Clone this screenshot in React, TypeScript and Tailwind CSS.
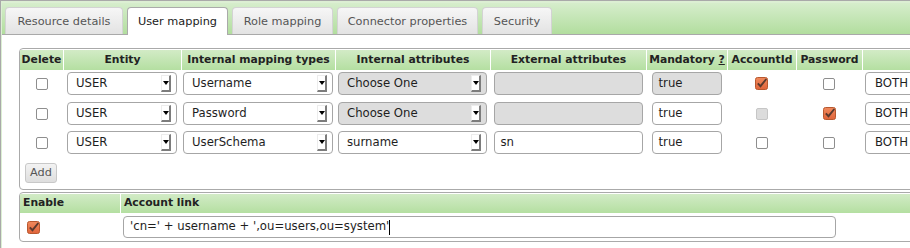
import React from "react";

function Box({ checked, disabled }: { checked?: boolean; disabled?: boolean }) {
  if (checked) {
    return (
      <svg width="13" height="13" viewBox="0 0 13 13" className="block">
        <defs>
          <linearGradient id="cbg" x1="0" y1="0" x2="0" y2="1">
            <stop offset="0" stopColor="#f08a5d" />
            <stop offset="1" stopColor="#e0643a" />
          </linearGradient>
        </defs>
        <rect x="0.5" y="0.5" width="12" height="12" rx="2" fill="url(#cbg)" stroke="#b8582f" />
        <path d="M2.8 6.3 L5.5 9.2 L11.3 2" fill="none" stroke="#5a3a2e" strokeWidth="1.9" />
      </svg>
    );
  }
  return (
    <div
      className={
        disabled
          ? "w-[12px] h-[12px] rounded-[2px] border border-[#c6c6c6] bg-[#dcdcdc]"
          : "w-[12px] h-[12px] rounded-[2px] border border-[#8e8e8e] bg-white"
      }
    />
  );
}

function Arrow() {
  return (
    <div className="w-[10px] h-[17px] shrink-0 flex items-center justify-center border-t border-l border-[#ececec] border-r-2 border-b-2 border-r-[#7c7c7c] border-b-[#7c7c7c] bg-white">
      <svg width="6" height="4" viewBox="0 0 6 4" className="block">
        <path d="M0 0 H6 L3 4 Z" fill="#000" />
      </svg>
    </div>
  );
}

function Sel({ value, cls, disabled }: { value: string; cls: string; disabled?: boolean }) {
  return (
    <div
      className={`${cls} h-[23px] rounded-[4px] border border-[#a6a6a6] flex items-center pl-[8px] pr-[5px] ${
        disabled ? "bg-[#dddddd]" : "bg-white"
      }`}
    >
      <span className="flex-1 text-[11.7px] text-[#1e1e1e] whitespace-nowrap overflow-hidden">{value}</span>
      <Arrow />
    </div>
  );
}

function Inp({ value, cls, disabled }: { value: string; cls: string; disabled?: boolean }) {
  return (
    <div
      className={`${cls} h-[23px] rounded-[4px] border border-[#a6a6a6] flex items-center pl-[6px] text-[11.7px] text-[#1e1e1e] ${
        disabled ? "bg-[#dddddd]" : "bg-white"
      }`}
    >
      {value}
    </div>
  );
}

const rows = [
  { im: "Username", ia: "Choose One", iaDis: true, ea: "", eaDis: true, man: "true", manDis: true, acc: "checked", pwd: "off" },
  { im: "Password", ia: "Choose One", iaDis: true, ea: "", eaDis: true, man: "true", manDis: false, acc: "disabled", pwd: "checked" },
  { im: "UserSchema", ia: "surname", iaDis: false, ea: "sn", eaDis: false, man: "true", manDis: false, acc: "off", pwd: "off" },
];

export default function App() {
  const tabs = [
    { label: "Resource details", w: "w-[118px]", active: false },
    { label: "User mapping", w: "w-[101px]", active: true },
    { label: "Role mapping", w: "w-[101px]", active: false },
    { label: "Connector properties", w: "w-[141px]", active: false },
    { label: "Security", w: "w-[70px]", active: false },
  ];
  const hd = "h-full flex items-center justify-center border-l border-white text-[10.8px] font-bold text-[#222]";
  return (
    <div className="w-[910px] h-[248px] overflow-hidden bg-white font-['DejaVu_Sans',sans-serif]">
      <div className="w-[1000px] h-[300px] border-t border-l border-[#a9a9a9] bg-[#dcefd3] pt-[2px] pl-[1px]">
        <div className="h-[32px] bg-gradient-to-b from-[#d6edcc] to-[#b2de9e] border-b border-[#a9a9a9] flex items-end gap-[4px] pl-[3px]">
          {tabs.map((t) =>
            t.active ? (
              <div
                key={t.label}
                className={`${t.w} h-[28px] mb-[-1px] rounded-t-[4px] border border-b-0 border-[#aaaaaa] bg-white flex items-center justify-center text-[11.3px] text-[#212121] pt-[2px]`}
              >
                {t.label}
              </div>
            ) : (
              <div
                key={t.label}
                className={`${t.w} h-[27px] rounded-t-[4px] border border-b-0 border-[#d3d3d3] bg-gradient-to-b from-[#f6f6f6] to-[#e3e3e3] flex items-center justify-center text-[11.3px] text-[#555] pt-[3px]`}
              >
                {t.label}
              </div>
            )
          )}
        </div>
        <div className="bg-white h-[260px] pt-[13px] pl-[17px]">
          {/* Mapping box */}
          <div className="w-[980px] border border-[#aaaaaa] rounded-[4px] pt-[1px] pb-[6px]">
            <div className="h-[20px] flex bg-gradient-to-b from-[#d2ebc6] to-[#b4dfa1]">
              <div className="w-[43px] h-full flex items-center justify-center text-[10.8px] font-bold text-[#222]">Delete</div>
              <div className={`w-[118px] ${hd}`}>Entity</div>
              <div className={`w-[154px] ${hd}`}>Internal mapping types</div>
              <div className={`w-[155px] ${hd}`}>Internal attributes</div>
              <div className={`w-[156px] ${hd}`}>External attributes</div>
              <div className={`w-[81px] ${hd}`}>
                Mandatory&nbsp;<span className="underline">?</span>
              </div>
              <div className={`w-[69px] ${hd}`}>AccountId</div>
              <div className={`w-[66px] ${hd}`}>Password</div>
              <div className={`w-[120px] ${hd}`}></div>
            </div>
            {rows.map((r, i) => (
              <div key={i} className={`flex items-start pt-[2px] ${i === 0 ? "h-[30px]" : "h-[29px]"}`}>
                <div className="w-[43px] h-[23px] flex items-center justify-center">
                  <Box />
                </div>
                <div className="w-[118px] flex justify-center">
                  <Sel value="USER" cls="w-[110px]" />
                </div>
                <div className="w-[154px] flex justify-center">
                  <Sel value={r.im} cls="w-[150px]" />
                </div>
                <div className="w-[155px] flex justify-center">
                  <Sel value={r.ia} cls="w-[149px]" disabled={r.iaDis} />
                </div>
                <div className="w-[156px] flex justify-center">
                  <Inp value={r.ea} cls="w-[149px]" disabled={r.eaDis} />
                </div>
                <div className="w-[81px] flex justify-center">
                  <Inp value={r.man} cls="w-[70px]" disabled={r.manDis} />
                </div>
                <div className="w-[69px] h-[23px] flex items-center justify-center">
                  <Box checked={r.acc === "checked"} disabled={r.acc === "disabled"} />
                </div>
                <div className="w-[66px] h-[23px] flex items-center justify-center">
                  <Box checked={r.pwd === "checked"} />
                </div>
                <div className="w-[120px] pl-[3px]">
                  <div className="w-[110px] h-[23px] rounded-[4px] border border-[#a6a6a6] bg-white flex items-center pl-[9px] text-[11.7px] text-[#1e1e1e]">
                    BOTH
                  </div>
                </div>
              </div>
            ))}
            <div className="mt-[5px] ml-[5px] w-[32px] h-[20px] rounded-[3px] border border-[#c8c8c8] bg-gradient-to-b from-[#f3f3f3] to-[#dedede] flex items-center justify-center text-[11.3px] text-[#555]">
              Add
            </div>
          </div>
          {/* Account link box */}
          <div className="w-[980px] mt-[2px] border border-[#aaaaaa] rounded-[4px] pt-[1px] pb-[3px]">
            <div className="h-[19px] flex bg-gradient-to-b from-[#d2ebc6] to-[#b4dfa1]">
              <div className="w-[100px] h-full flex items-center pl-[3px] text-[10.8px] font-bold text-[#222]">Enable</div>
              <div className="flex-1 h-full flex items-center pl-[3px] border-l border-white text-[10.8px] font-bold text-[#222]">
                Account link
              </div>
            </div>
            <div className="flex items-center pt-[3px]">
              <div className="w-[100px] pl-[7px] h-[22px] flex items-center">
                <Box checked />
              </div>
              <div className="pl-[3px]">
                <div className="w-[713px] h-[22px] rounded-[4px] border border-[#a6a6a6] bg-white flex items-center pl-[6px] text-[11.7px] text-[#1e1e1e]">
                  <span className="whitespace-pre">'cn=' + username + ',ou=users,ou=system'</span>
                  <span className="inline-block w-[1px] h-[15px] bg-black" />
                </div>
              </div>
            </div>
          </div>
        </div>
      </div>
    </div>
  );
}
